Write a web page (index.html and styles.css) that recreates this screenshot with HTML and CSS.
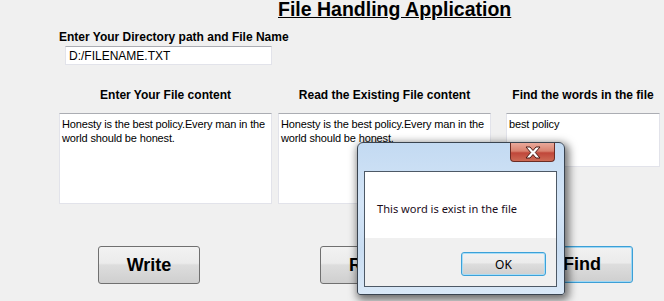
FILE: index.html
```html
<!DOCTYPE html>
<html lang="en">
<head>
  <meta charset="UTF-8">
  <title>File Handling Application</title>
  <link rel="stylesheet" href="styles.css">
</head>
<body>

<h1 class="title">File Handling Application</h1>

<div class="path-group">
  <label class="lbl">Enter Your Directory path and File Name</label>
  <input type="text" class="path-input" value="D:/FILENAME.TXT">
</div>

<div class="columns">
  <div class="col">
    <div class="lbl col-lbl">Enter Your File content</div>
    <textarea class="box">Honesty is the best policy.Every man in the world should be honest.</textarea>
  </div>
  <div class="col">
    <div class="lbl col-lbl">Read the Existing File content</div>
    <textarea class="box">Honesty is the best policy.Every man in the world should be honest.</textarea>
  </div>
  <div class="col col-find">
    <div class="lbl col-lbl">Find the words in the file</div>
    <textarea class="box box-short">best policy</textarea>
  </div>
</div>

<div class="buttons">
  <button class="btn btn-write">Write</button>
  <button class="btn btn-read">Read</button>
  <button class="btn btn-find">Find</button>
</div>

<!-- message box -->
<div class="msgbox">
  <div class="msg-titlebar">
    <div class="msg-close">
      <svg width="18" height="13" viewBox="0 0 18 13">
        <path d="M2 1 L6 1 L9 4.5 L12 1 L16 1 L11.3 6.5 L16 12 L12 12 L9 8.5 L6 12 L2 12 L6.7 6.5 Z" fill="#fff" stroke="#4a1a14" stroke-width="1"/>
      </svg>
    </div>
  </div>
  <div class="msg-client">
    <div class="msg-text">This word is exist in the file</div>
    <div class="msg-footer">
      <button class="msg-ok">OK</button>
    </div>
  </div>
</div>

</body>
</html>
```

FILE: styles.css
```css
html, body {
  margin: 0;
  padding: 0;
}
body {
  width: 664px;
  height: 301px;
  overflow: hidden;
  background-color: #f0f0f0;
  font-family: "Liberation Sans", Arial, sans-serif;
  color: #000;
  position: relative;
}
.title {
  margin: 0 0 0 278px;
  padding-top: 1px;
  font-size: 19.5px;
  line-height: 17px;
  font-weight: bold;
  text-decoration: underline;
  height: 27px;
}
.lbl {
  font-size: 12px;
  font-weight: bold;
  line-height: 13px;
}
.path-group {
  padding-left: 59px;
  margin-top: 3px;
}
.path-group .lbl {
  display: block;
}
.path-input {
  display: block;
  margin: 2px 0 0 6px;
  width: 207px;
  height: 19px;
  box-sizing: border-box;
  border: 1px solid #e2e3ea;
  border-top-color: #abadb3;
  background: #fff;
  font-family: "Liberation Sans", Arial, sans-serif;
  font-size: 12px;
  padding: 0 3px;
  outline: none;
}
.columns {
  display: flex;
  padding-left: 59px;
  margin-top: 24px;
}
.col {
  width: 213px;
  margin-right: 6px;
}
.col-find {
  width: 154px;
  margin-left: 9px;
  margin-right: 0;
}
.col-lbl {
  text-align: center;
  height: 24px;
}
.box {
  display: block;
  box-sizing: border-box;
  width: 100%;
  height: 91px;
  margin: 0;
  border: 1px solid #e2e3ea;
  border-top-color: #abadb3;
  background: #fff;
  font-family: "Liberation Sans", Arial, sans-serif;
  font-size: 11px;
  letter-spacing: -0.15px;
  line-height: 14px;
  padding: 3px 0 3px 2px;
  resize: none;
  overflow: hidden;
  outline: none;
}
.box-short {
  height: 54px;
}
.buttons {
  display: flex;
  padding-left: 98px;
  margin-top: 42px;
}
.btn {
  width: 102px;
  height: 38px;
  border: 1px solid #707070;
  border-radius: 3px;
  background: linear-gradient(#f2f2f2 0%, #ebebeb 45%, #dddddd 50%, #cfcfcf 100%);
  font-family: "Liberation Sans", Arial, sans-serif;
  font-size: 18px;
  font-weight: bold;
  color: #000;
  padding: 0;
}
.btn-read {
  margin-left: 120px;
}
.btn-find {
  margin-left: 109px;
  height: 37px;
  border-color: #3c9fd6;
  box-shadow: inset 0 0 0 1px #9fd8f5;
}

/* message box */
.msgbox {
  position: absolute;
  left: 357px;
  top: 142px;
  width: 208px;
  height: 153px;
  box-sizing: border-box;
  border: 1px solid #3a4450;
  border-radius: 6px 6px 3px 3px;
  background: linear-gradient(180deg, #c3daf2 0%, #d4e5f7 40%, #c9ddf2 70%, #d9e8f7 100%);
  box-shadow: 2px 3px 9px 2px rgba(0, 0, 0, 0.55);
  padding: 0 6px 7px 6px;
}
.msg-titlebar {
  height: 28px;
  position: relative;
}
.msg-close {
  position: absolute;
  right: 3px;
  top: 0;
  width: 45px;
  height: 19px;
  box-sizing: border-box;
  border: 1px solid #6b2c24;
  border-top: none;
  border-radius: 0 0 4px 4px;
  background: linear-gradient(#e9a99b 0%, #d9826f 45%, #c0473a 55%, #cd6a55 100%);
  display: flex;
  justify-content: center;
  align-items: center;
}
.msg-client {
  width: 193px;
  height: 116px;
  box-sizing: border-box;
  border: 1px solid #4d5966;
  background: #f0f0f0;
}
.msg-text {
  background: #fff;
  height: 66px;
  box-sizing: border-box;
  padding: 29px 0 0 12px;
  font-family: "Noto Sans", "Open Sans", sans-serif;
  font-size: 11.1px;
  line-height: 16px;
  color: #1a0c1a;
}
.msg-footer {
  padding: 14px 0 0 96px;
}
.msg-ok {
  width: 85px;
  height: 24px;
  border: 1px solid #3ca1d8;
  border-radius: 3px;
  box-shadow: inset 0 0 0 1px #a8ddf7;
  background: linear-gradient(#f2f2f2 0%, #ebebeb 45%, #dddddd 50%, #cfcfcf 100%);
  font-family: "Noto Sans", "Open Sans", sans-serif;
  font-size: 12px;
  color: #000;
  padding: 0;
}
```
